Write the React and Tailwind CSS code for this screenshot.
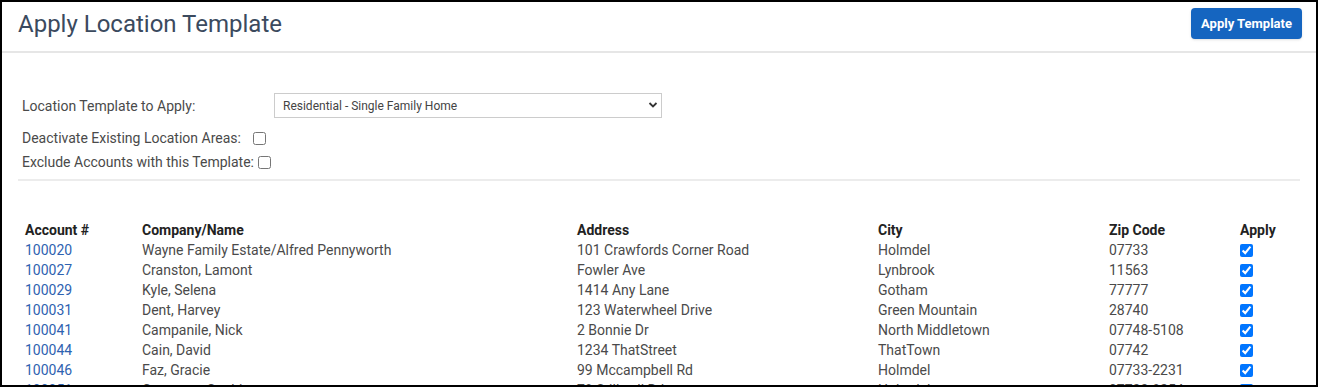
import React from 'react';

const rows = [
  ['100020', 'Wayne Family Estate/Alfred Pennyworth', '101 Crawfords Corner Road', 'Holmdel', '07733'],
  ['100027', 'Cranston, Lamont', 'Fowler Ave', 'Lynbrook', '11563'],
  ['100029', 'Kyle, Selena', '1414 Any Lane', 'Gotham', '77777'],
  ['100031', 'Dent, Harvey', '123 Waterwheel Drive', 'Green Mountain', '28740'],
  ['100041', 'Campanile, Nick', '2 Bonnie Dr', 'North Middletown', '07748-5108'],
  ['100044', 'Cain, David', '1234 ThatStreet', 'ThatTown', '07742'],
  ['100046', 'Faz, Gracie', '99 Mccampbell Rd', 'Holmdel', '07733-2231'],
  ['100051', 'Costanza, Sophia', '78 Stillwell Rd', 'Holmdel', '07733-8254'],
];

const App = () => {
  return (
    <div
      className="h-[387px] w-[1318px] overflow-hidden border-2 border-black bg-white text-[#4a4a4a]"
      style={{ fontFamily: 'Roboto, "Liberation Sans", sans-serif' }}
    >
      {/* Header */}
      <div className="flex h-[51px] items-start justify-between border-b-2 border-[#e6e6e6] pl-4 pr-[14px] pt-[6px]">
        <h1 className="text-[24px] font-normal leading-[32px] text-[#3b4a5e]">Apply Location Template</h1>
        <button className="h-[31px] rounded-[4px] bg-[#1565c0] px-[10px] text-[13px] font-bold text-white shadow-sm">
          Apply Template
        </button>
      </div>

      {/* Form */}
      <div className="mx-4 mt-[40px] border-b-2 border-[#ececec] pb-[9px] pl-1 text-[14px]">
        <div className="flex items-center">
          <label className="w-[252px] pt-[2px]">Location Template to Apply:</label>
          <div className="relative">
            <select className="h-[25px] w-[388px] appearance-none border border-[#cccccc] bg-white pl-2 text-[12px] text-[#444]">
              <option>Residential - Single Family Home</option>
            </select>
            <svg className="pointer-events-none absolute right-[4px] top-[8px]" width="10" height="8" viewBox="0 0 10 8">
              <path d="M1.5 2 L5 5.5 L8.5 2" fill="none" stroke="#333" strokeWidth="1.8" />
            </svg>
          </div>
        </div>
        <div className="mt-[12px] flex h-[16px] items-center">
          <label>Deactivate Existing Location Areas:</label>
          <input type="checkbox" className="ml-[12px] h-[13px] w-[13px]" />
        </div>
        <div className="mt-[8px] flex h-[16px] items-center">
          <label>Exclude Accounts with this Template:</label>
          <input type="checkbox" className="ml-[4px] h-[13px] w-[13px]" />
        </div>
      </div>

      {/* Table */}
      <table className="ml-[23px] mt-[39px] text-[14px] leading-[20px]">
        <thead>
          <tr className="text-left font-bold text-[#222]">
            <th className="w-[117px] p-0 font-bold">Account #</th>
            <th className="w-[435px] p-0 font-bold">Company/Name</th>
            <th className="w-[301px] p-0 font-bold">Address</th>
            <th className="w-[231px] p-0 font-bold">City</th>
            <th className="w-[131px] p-0 font-bold">Zip Code</th>
            <th className="p-0 font-bold">Apply</th>
          </tr>
        </thead>
        <tbody>
          {rows.map((r) => (
            <tr key={r[0]} className="h-[20px]">
              <td className="p-0 text-[#2e62b0]">{r[0]}</td>
              <td className="p-0">{r[1]}</td>
              <td className="p-0">{r[2]}</td>
              <td className="p-0">{r[3]}</td>
              <td className="p-0">{r[4]}</td>
              <td className="p-0">
                <input type="checkbox" defaultChecked className="block h-[13px] w-[13px]" />
              </td>
            </tr>
          ))}
        </tbody>
      </table>
    </div>
  );
};

export default App;
